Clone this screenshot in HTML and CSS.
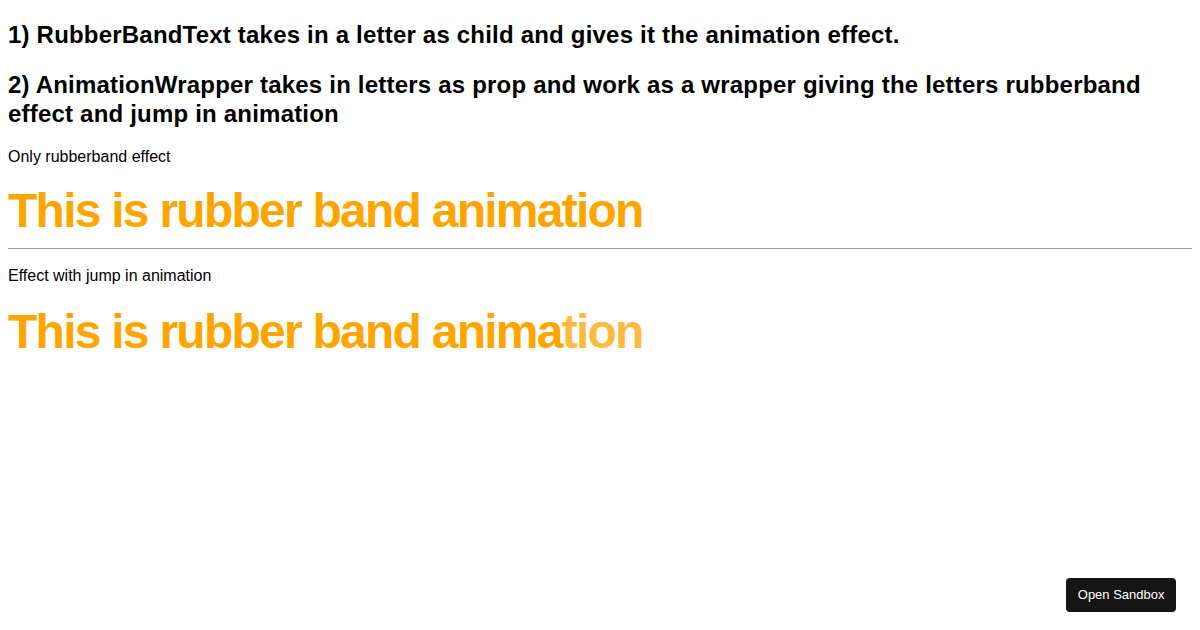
FILE: index.html
```html
<!DOCTYPE html>
<html>
<head>
    <title>Rubber Band Text</title>
    <link rel="stylesheet" href="styles.css">
</head>
<body>
    <h2>1) RubberBandText takes in a letter as child and gives it the animation effect.</h2>
    <h2>2) AnimationWrapper takes in letters as prop and work as a wrapper giving the letters rubberband effect and jump in animation</h2>

    <div class="demo">
        <div class="caption">Only rubberband effect</div>
        <div class="rubber">This is rubber band animation</div>
    </div>

    <hr>

    <div class="demo">
        <div class="caption">Effect with jump in animation</div>
        <div class="rubber">This is rubber band anima<span class="jump">t</span><span class="jump">i</span><span class="jump">o</span><span class="jump">n</span></div>
    </div>

    <a class="sandbox-btn" href="#">Open Sandbox</a>
</body>
</html>
```

FILE: styles.css
```css
body {
    margin: 0;
    padding: 0 8px;
    font-family: "Liberation Sans", Arial, sans-serif;
    color: #000;
    background: #fff;
}
h2 {
    font-size: 24px;
    line-height: 29px;
    letter-spacing: 0.2px;
    margin: 20px 0;
}
h2 + h2 {
    margin-top: 21px;
}
.caption {
    font-size: 16px;
    margin-bottom: 17px;
}
.rubber {
    color: #ffa500;
    font-size: 48px;
    font-weight: bold;
    letter-spacing: -1.75px;
}
/* letters still landing in the jump-in animation */
.jump {
    opacity: 0.75;
}
hr {
    margin: 10px 0 18px;
    border: 0;
    border-top: 1px solid #999;
}
.demo + hr + .demo .caption {
    margin-bottom: 19px;
}
.sandbox-btn {
    position: fixed;
    right: 24px;
    bottom: 18px;
    background: #151515;
    color: #fff;
    font-size: 13px;
    line-height: 15px;
    text-decoration: none;
    padding: 9px 11.5px 10px;
    border-radius: 4px;
}
```
